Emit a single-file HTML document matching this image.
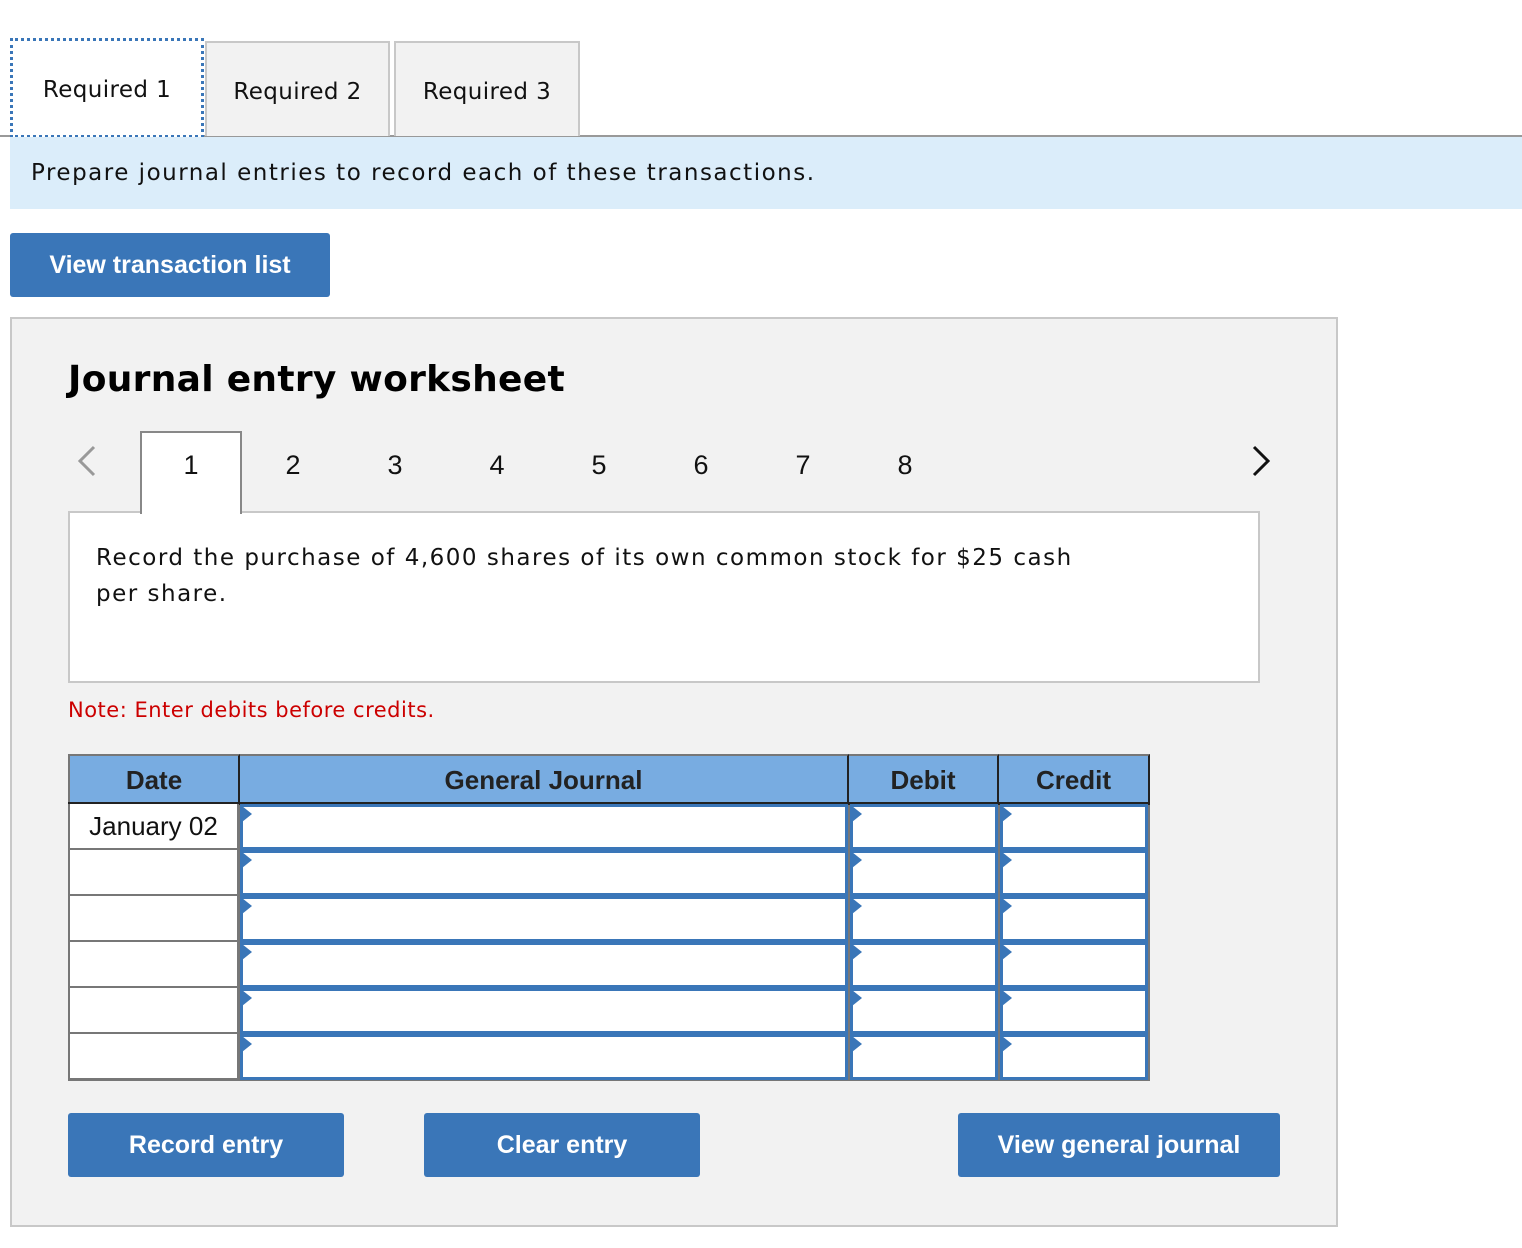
<!DOCTYPE html>
<html><head><style>
*{margin:0;padding:0;box-sizing:border-box}
body{width:1522px;height:1248px;background:#fff;position:relative;font-family:"DejaVu Sans",Verdana,sans-serif;color:#111;overflow:hidden}
.a{position:absolute}
.tab{position:absolute;top:41px;height:95px;border:2px solid #c8c8c8;border-bottom:none;background:#f2f2f2;font-size:23px;letter-spacing:0.4px;display:flex;align-items:center;justify-content:center;padding-top:4px}
.btn{position:absolute;background:#3a76b8;color:#fff;font-family:"Liberation Sans",Arial,sans-serif;font-weight:bold;font-size:25px;display:flex;align-items:center;justify-content:center;border-radius:3px}
.num{position:absolute;top:450px;font-family:"Liberation Sans",Arial,sans-serif;font-size:27px;width:40px;text-align:center}
.th{position:absolute;top:754px;height:50px;background:#78ace1;font-family:"Liberation Sans",Arial,sans-serif;font-weight:bold;font-size:26px;color:#222;display:flex;align-items:center;justify-content:center;border-top:2px solid #777}
.in{position:absolute;border:3px solid #3a76b8;background:#fff}
.in:before{content:"";position:absolute;left:-1px;top:-1px;border-left:10px solid #3a76b8;border-top:8px solid transparent;border-bottom:8px solid transparent}
.dc{position:absolute;left:68px;width:171px;height:46px;background:#fff;border-left:2px solid #777;border-bottom:2px solid #777;border-right:2px solid #777}
</style></head><body>
<div class="a" style="left:0;top:135px;width:1522px;height:2px;background:#999"></div>
<div class="tab" style="left:10px;top:38px;width:194px;height:100px;background:#fff;border:3px dotted #3a76b8">Required 1</div>
<div class="tab" style="left:205px;width:185px">Required 2</div>
<div class="tab" style="left:394px;width:186px">Required 3</div>
<div class="a" style="left:10px;top:137px;width:1512px;height:72px;background:#dbedfa;font-size:23px;letter-spacing:1.5px;padding:23px 0 0 21px">Prepare journal entries to record each of these transactions.</div>
<div class="btn" style="left:10px;top:233px;width:320px;height:64px">View transaction list</div>
<div class="a" style="left:10px;top:317px;width:1328px;height:910px;background:#f2f2f2;border:2px solid #c8c8c8"></div>
<div class="a" style="left:68px;top:359px;font-size:36px;letter-spacing:0.3px;font-weight:bold;color:#000">Journal entry worksheet</div>
<svg class="a" style="left:74px;top:445px" width="24" height="32"><path d="M20 2 L6 16 L20 30" stroke="#999" stroke-width="3" fill="none"/></svg>
<svg class="a" style="left:1250px;top:445px" width="24" height="32"><path d="M4 2 L18 16 L4 30" stroke="#111" stroke-width="3" fill="none"/></svg>
<div class="a" style="left:68px;top:511px;width:1192px;height:172px;background:#fff;border:2px solid #c8c8c8"></div>
<div class="a" style="left:140px;top:431px;width:102px;height:83px;background:#fff;border:2px solid #888;border-bottom:none"></div>
<div class="num" style="left:171px">1</div><div class="num" style="left:273px">2</div><div class="num" style="left:375px">3</div><div class="num" style="left:477px">4</div><div class="num" style="left:579px">5</div><div class="num" style="left:681px">6</div><div class="num" style="left:783px">7</div><div class="num" style="left:885px">8</div>
<div class="a" style="left:96px;top:540px;width:1010px;font-size:23px;letter-spacing:1.5px;line-height:36px">Record the purchase of 4,600 shares of its own common stock for $25 cash per share.</div>
<div class="a" style="left:68px;top:698px;font-size:21px;letter-spacing:0.5px;color:#c00">Note: Enter debits before credits.</div>
<div class="th" style="left:68px;width:172px;border-left:2px solid #777;border-right:2px solid #222">Date</div>
<div class="th" style="left:240px;width:609px;border-right:2px solid #222">General Journal</div>
<div class="th" style="left:849px;width:150px;border-right:2px solid #222">Debit</div>
<div class="th" style="left:999px;width:151px;border-right:2px solid #222">Credit</div>
<div class="a" style="left:68px;top:802px;width:1082px;height:3px;background:#222"></div>
<div class="a" style="left:68px;top:805px;width:1082px;height:276px;background:#777"></div>
<div class="dc" style="top:804px;font-family:'Liberation Sans',Arial,sans-serif;font-size:26px;display:flex;align-items:center;justify-content:center">January 02</div>
<div class="dc" style="top:850px"></div><div class="dc" style="top:896px"></div><div class="dc" style="top:942px"></div><div class="dc" style="top:988px"></div><div class="dc" style="top:1034px"></div>
<div class="in" style="left:240px;top:804px;width:608px;height:46px"></div><div class="in" style="left:850px;top:804px;width:148px;height:46px"></div><div class="in" style="left:1000px;top:804px;width:148px;height:46px"></div>
<div class="in" style="left:240px;top:850px;width:608px;height:46px"></div><div class="in" style="left:850px;top:850px;width:148px;height:46px"></div><div class="in" style="left:1000px;top:850px;width:148px;height:46px"></div>
<div class="in" style="left:240px;top:896px;width:608px;height:46px"></div><div class="in" style="left:850px;top:896px;width:148px;height:46px"></div><div class="in" style="left:1000px;top:896px;width:148px;height:46px"></div>
<div class="in" style="left:240px;top:942px;width:608px;height:46px"></div><div class="in" style="left:850px;top:942px;width:148px;height:46px"></div><div class="in" style="left:1000px;top:942px;width:148px;height:46px"></div>
<div class="in" style="left:240px;top:988px;width:608px;height:46px"></div><div class="in" style="left:850px;top:988px;width:148px;height:46px"></div><div class="in" style="left:1000px;top:988px;width:148px;height:46px"></div>
<div class="in" style="left:240px;top:1034px;width:608px;height:46px"></div><div class="in" style="left:850px;top:1034px;width:148px;height:46px"></div><div class="in" style="left:1000px;top:1034px;width:148px;height:46px"></div>
<div class="btn" style="left:68px;top:1113px;width:276px;height:64px">Record entry</div>
<div class="btn" style="left:424px;top:1113px;width:276px;height:64px">Clear entry</div>
<div class="btn" style="left:958px;top:1113px;width:322px;height:64px">View general journal</div>
</body></html>
